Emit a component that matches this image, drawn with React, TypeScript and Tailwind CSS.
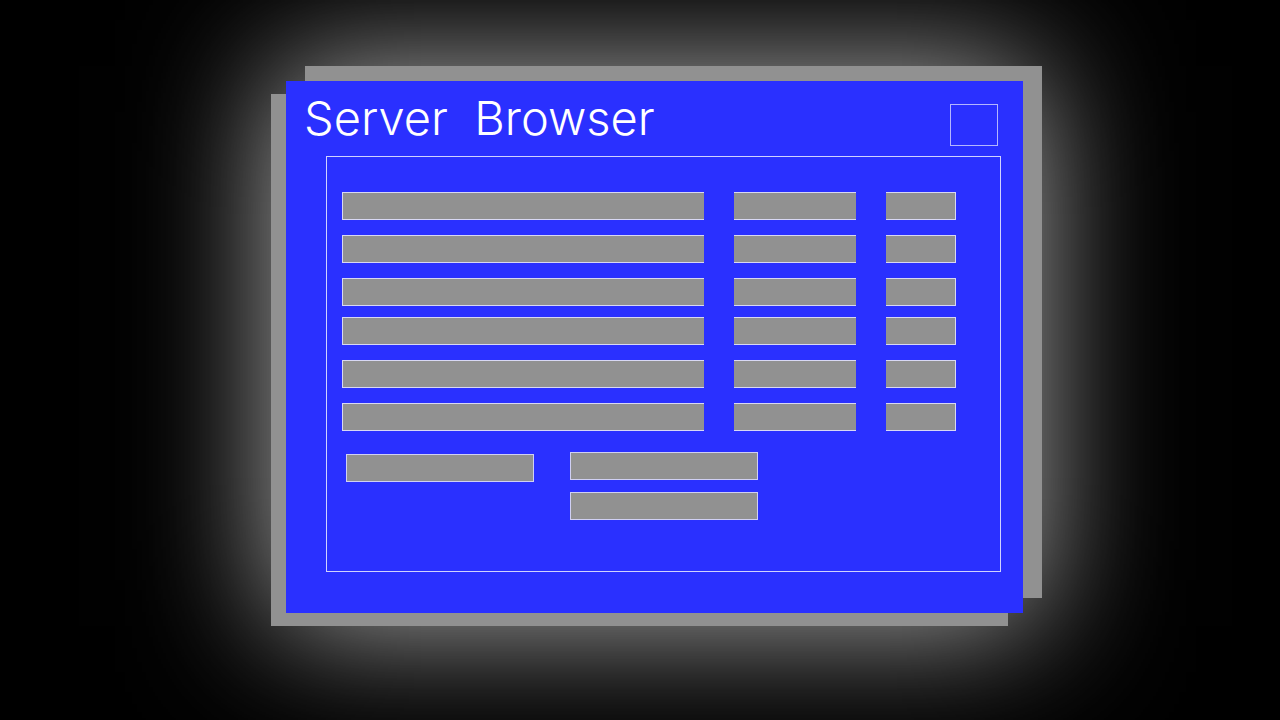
import React from 'react';

const rowGroups = [
  ['row-1', 'row-2', 'row-3'],
  ['row-4', 'row-5', 'row-6'],
];

const ServerRow: React.FC = () => {
  return (
    <li className="grid grid-cols-[362fr_122fr_70fr] gap-x-[30px]">
      <div className="h-7 border-y border-l border-[#d8d8f4] bg-[#919191]" />
      <div className="h-7 border-y border-[#d8d8f4] bg-[#919191]" />
      <div className="h-7 border-y border-r border-[#d8d8f4] bg-[#919191]" />
    </li>
  );
};

const ActionButton: React.FC<{ label: string }> = ({ label }) => {
  return (
    <button
      type="button"
      aria-label={label}
      className="block h-7 w-[188px] border border-[#d0d0f4] bg-[#919191]"
    />
  );
};

const App: React.FC = () => {
  return (
    <main className="flex min-h-screen items-center justify-center overflow-hidden bg-black pb-[26px] pl-[29px]">
      {/* Window with its two offset plates and the glow behind them */}
      <section className="w-full max-w-[737px] bg-[#2a30ff] pr-[22px] pb-[41px] pl-10 shadow-[19px_-15px_0_#919191,-15px_13px_0_#919191,1px_-1px_130px_14px_#b4b4b4]">
        <header className="-ml-[22px] flex h-[75px] items-start justify-between pr-[3px]">
          <h1 className="pt-[9px] font-['Inter',sans-serif] text-[47px] leading-[56px] font-light whitespace-pre text-white">
            Server  Browser
          </h1>
          <button
            type="button"
            aria-label="Close"
            className="mt-[23px] h-[42px] w-12 border border-[#b4b6ff]"
          />
        </header>

        <div className="border border-[#d0d2ff] pt-[35px] pr-11 pb-[51px] pl-[15px]">
          <div className="flex flex-col gap-[11px]">
            {rowGroups.map((group, i) => (
              <ul key={i} className="flex flex-col gap-[15px]">
                {group.map((row) => (
                  <ServerRow key={row} />
                ))}
              </ul>
            ))}
          </div>

          {/* Actions */}
          <div className="mt-[21px] flex items-start gap-9 pl-1">
            <div className="pt-[2px]">
              <ActionButton label="Refresh" />
            </div>
            <div className="flex flex-col gap-3">
              <ActionButton label="Join" />
              <ActionButton label="Back" />
            </div>
          </div>
        </div>
      </section>
    </main>
  );
};

export default App;
